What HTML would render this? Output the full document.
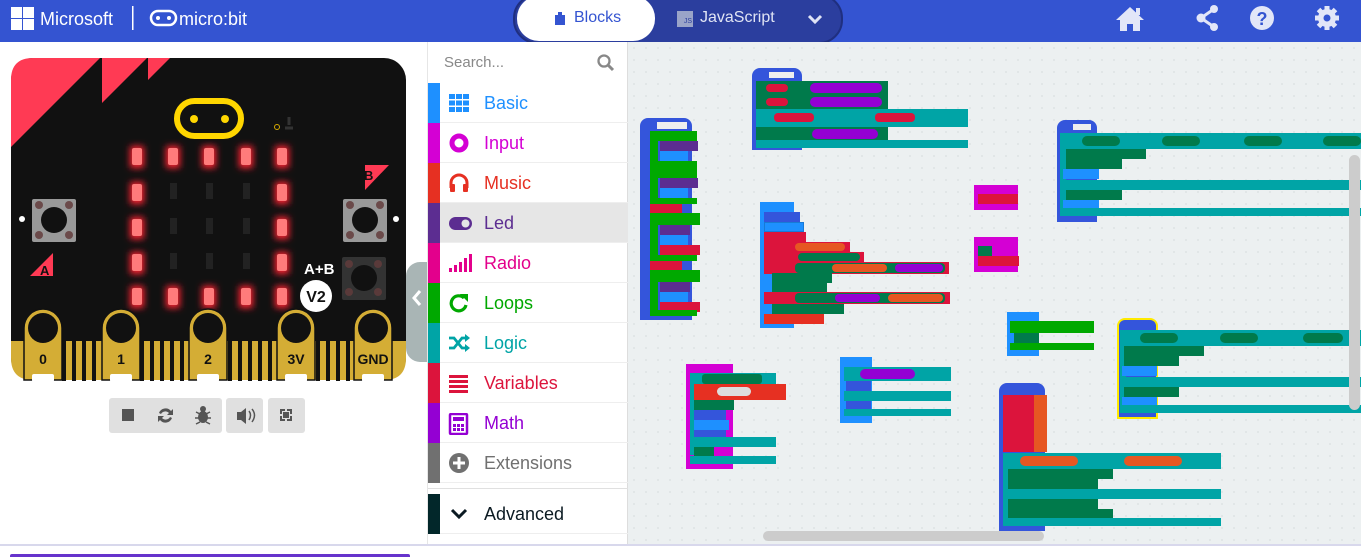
<!DOCTYPE html>
<html><head><meta charset="utf-8"><style>
*{margin:0;padding:0;box-sizing:border-box}
body{width:1361px;height:557px;overflow:hidden;position:relative;background:#fff;font-family:"Liberation Sans",Arial,sans-serif}
.hdr{position:absolute;left:0;top:0;width:1361px;height:42px;background:#3454d1}
.ws{position:absolute;left:628px;top:42px;width:733px;height:502px;background:#ecf0f1;background-image:radial-gradient(#dde2e4 1px,transparent 1px);background-size:12px 12px}
.tb{position:absolute;left:427px;top:42px;width:201px;height:502px;background:#fff;border-left:1px solid #e6e6e6;border-right:1px solid #ddd}
.cat{position:absolute;left:0;width:200px;height:40px;border-bottom:1px solid #eee;font-size:18px;line-height:40px}
.cat .bar{position:absolute;left:0;top:0;width:12px;height:40px}
.cat .t{position:absolute;left:56px;top:0}
.cat svg{position:absolute;left:20px;top:10px}
.b{position:absolute}
</style></head><body>
<div class="hdr"></div>
<svg style="position:absolute;left:0;top:0" width="520" height="42">
<g fill="#fff"><rect x="11" y="7" width="11" height="11"/><rect x="23" y="7" width="11" height="11"/><rect x="11" y="19" width="11" height="11"/><rect x="23" y="19" width="11" height="11"/></g>
<text x="40" y="25" fill="#fff" font-size="18" font-family="Liberation Sans">Microsoft</text>
<rect x="132" y="6" width="1.5" height="24" fill="#fff"/>
<rect x="151" y="11" width="25" height="14" rx="7" fill="none" stroke="#fff" stroke-width="2.5"/>
<circle cx="158" cy="18" r="2" fill="#fff"/><circle cx="169" cy="18" r="2" fill="#fff"/>
<text x="179" y="25" fill="#fff" font-size="18" font-family="Liberation Sans">micro:bit</text>
</svg>
<div style="position:absolute;left:513px;top:-6px;width:330px;height:50px;background:#2b3e9e;border-radius:24px;border:2px solid #1f2f80"></div>
<div style="position:absolute;left:517px;top:-4px;width:138px;height:45px;background:#fff;border-radius:22px"></div>
<svg style="position:absolute;left:553px;top:10px" width="14" height="16"><path d="M2 5h3V2h4v3h3v10H2z" fill="#3454d1"/></svg>
<div style="position:absolute;left:574px;top:9px;color:#3454d1;font-size:16px">Blocks</div>
<div style="position:absolute;left:677px;top:11px;width:16px;height:16px;background:#9aa4c8;font-size:7px;color:#2b3e9e;text-align:right;line-height:22px;padding-right:1px">JS</div>
<div style="position:absolute;left:700px;top:9px;color:#e0e4f4;font-size:16px">JavaScript</div>
<svg style="position:absolute;left:806px;top:12px" width="18" height="14"><path d="M3 4l6 6 6-6" stroke="#dfe3f5" stroke-width="3" fill="none"/></svg>
<svg style="position:absolute;left:1110px;top:0" width="251" height="42" fill="#e2e6f8">
<path d="M6 20L20 7l14 13h-4v11h-7v-7h-6v7h-7V20z"/><rect x="26" y="8" width="4" height="7"/>
<circle cx="104" cy="9" r="4"/><circle cx="104" cy="27" r="4"/><circle cx="91" cy="18" r="4.5"/><path d="M91 18L104 9M91 18L104 27" stroke="#e2e6f8" stroke-width="3"/>
<circle cx="152" cy="18" r="12"/><text x="152" y="25" font-size="18" font-weight="bold" fill="#3454d1" text-anchor="middle" font-family="Liberation Sans">?</text>
<circle cx="217" cy="18" r="9"/><g stroke="#e2e6f8" stroke-width="5"><path d="M217 6v24M205 18h24M208.5 9.5l17 17M225.5 9.5l-17 17"/></g><circle cx="217" cy="18" r="3.5" fill="#3454d1"/>
</svg>

<svg style="position:absolute;left:0;top:42px" width="427" height="502">
<defs><filter id="gl" x="-1" y="-1" width="3" height="3"><feGaussianBlur stdDeviation="3.5"/></filter></defs>
<g transform="translate(0,-42)">
<rect x="11" y="58" width="395" height="322" rx="22" fill="#111"/>
<path d="M33 58H100L11 147V80Q11 58 33 58z" fill="#ff3a54"/>
<path d="M102 58H147L102 103z" fill="#ff3a54"/>
<path d="M148 58H170L148 80z" fill="#ff3a54"/>
<rect x="177" y="101" width="64" height="35" rx="17.5" fill="none" stroke="#ffd600" stroke-width="6"/>
<circle cx="194" cy="119" r="4" fill="#ffd600"/><circle cx="225" cy="119" r="4" fill="#ffd600"/>
<circle cx="277" cy="127" r="2.5" fill="none" stroke="#d4a800" stroke-width="1"/>
<path d="M289 117v8M285 128h8" stroke="#333" stroke-width="3"/>
<g fill="#ff2030" filter="url(#gl)">
<rect x="130" y="146" width="14" height="22"/><rect x="166" y="146" width="14" height="22"/><rect x="202" y="146" width="14" height="22"/><rect x="239" y="146" width="14" height="22"/><rect x="275" y="146" width="14" height="22"/>
<rect x="130" y="182" width="14" height="22"/><rect x="275" y="182" width="14" height="22"/>
<rect x="130" y="217" width="14" height="22"/><rect x="275" y="217" width="14" height="22"/>
<rect x="130" y="252" width="14" height="22"/><rect x="275" y="252" width="14" height="22"/>
<rect x="130" y="286" width="14" height="22"/><rect x="166" y="286" width="14" height="22"/><rect x="202" y="286" width="14" height="22"/><rect x="239" y="286" width="14" height="22"/><rect x="275" y="286" width="14" height="22"/>
</g>
<g fill="#ff7b7b">
<rect x="132" y="148" width="10" height="17" rx="2"/><rect x="168" y="148" width="10" height="17" rx="2"/><rect x="204" y="148" width="10" height="17" rx="2"/><rect x="241" y="148" width="10" height="17" rx="2"/><rect x="277" y="148" width="10" height="17" rx="2"/>
<rect x="132" y="184" width="10" height="17" rx="2"/><rect x="277" y="184" width="10" height="17" rx="2"/>
<rect x="132" y="219" width="10" height="17" rx="2"/><rect x="277" y="219" width="10" height="17" rx="2"/>
<rect x="132" y="254" width="10" height="17" rx="2"/><rect x="277" y="254" width="10" height="17" rx="2"/>
<rect x="132" y="288" width="10" height="17" rx="2"/><rect x="168" y="288" width="10" height="17" rx="2"/><rect x="204" y="288" width="10" height="17" rx="2"/><rect x="241" y="288" width="10" height="17" rx="2"/><rect x="277" y="288" width="10" height="17" rx="2"/>
</g>
<g fill="#222"><rect x="170" y="183" width="7" height="16"/><rect x="206" y="183" width="7" height="16"/><rect x="243" y="183" width="7" height="16"/><rect x="170" y="218" width="7" height="16"/><rect x="206" y="218" width="7" height="16"/><rect x="243" y="218" width="7" height="16"/><rect x="170" y="253" width="7" height="16"/><rect x="206" y="253" width="7" height="16"/><rect x="243" y="253" width="7" height="16"/></g>
<rect x="32" y="199" width="44" height="43" rx="2" fill="#999"/><circle cx="54" cy="220" r="13" fill="#111"/>
<g fill="#6b4a4a"><circle cx="39" cy="205" r="4"/><circle cx="69" cy="205" r="4"/><circle cx="39" cy="235" r="4"/><circle cx="69" cy="235" r="4"/></g>
<circle cx="22" cy="219" r="3" fill="#fff"/>
<rect x="343" y="199" width="44" height="43" rx="2" fill="#999"/><circle cx="365" cy="220" r="13" fill="#111"/>
<g fill="#6b4a4a"><circle cx="350" cy="205" r="4"/><circle cx="380" cy="205" r="4"/><circle cx="350" cy="235" r="4"/><circle cx="380" cy="235" r="4"/></g>
<circle cx="396" cy="219" r="3" fill="#fff"/>
<rect x="342" y="257" width="44" height="43" rx="2" fill="#333"/><circle cx="364" cy="278" r="13" fill="#111"/>
<g fill="#5a3a3a"><circle cx="349" cy="264" r="4"/><circle cx="378" cy="264" r="4"/><circle cx="349" cy="292" r="4"/><circle cx="378" cy="292" r="4"/></g>
<path d="M30 276L53 253V276z" fill="#ff3a54"/><text x="40" y="275" font-size="13" font-weight="bold" fill="#111" font-family="Liberation Sans">A</text>
<path d="M365 190L389 165H365z" fill="#ff3a54"/><text x="364" y="180" font-size="13" font-weight="bold" fill="#111" font-family="Liberation Sans">B</text>
<text x="304" y="274" font-size="15" font-weight="bold" fill="#fff" font-family="Liberation Sans">A+B</text>
<circle cx="316" cy="296" r="16" fill="#fff"/><text x="316" y="302" font-size="16" font-weight="bold" fill="#111" text-anchor="middle" font-family="Liberation Sans">V2</text>
<path d="M11 341H406V358Q406 380 384 380H33Q11 380 11 358z" fill="#d4ad35"/>
<g fill="#111">
<rect x="62" y="341" width="4" height="40"/><rect x="72" y="341" width="4" height="40"/><rect x="82" y="341" width="4" height="40"/><rect x="92" y="341" width="4" height="40"/>
<rect x="140" y="341" width="4" height="40"/><rect x="150" y="341" width="4" height="40"/><rect x="160" y="341" width="4" height="40"/><rect x="170" y="341" width="4" height="40"/><rect x="180" y="341" width="4" height="40"/>
<rect x="228" y="341" width="4" height="40"/><rect x="238" y="341" width="4" height="40"/><rect x="248" y="341" width="4" height="40"/><rect x="258" y="341" width="4" height="40"/><rect x="268" y="341" width="4" height="40"/>
<rect x="316" y="341" width="4" height="40"/><rect x="326" y="341" width="4" height="40"/><rect x="336" y="341" width="4" height="40"/><rect x="346" y="341" width="4" height="40"/>
</g>
<g fill="#d4ad35" stroke="#111" stroke-width="1.5">
<path d="M24 380V328a19 19 0 0 1 38 0V380z"/><path d="M102 380V328a19 19 0 0 1 38 0V380z"/><path d="M189 380V328a19 19 0 0 1 38 0V380z"/><path d="M277 380V328a19 19 0 0 1 38 0V380z"/><path d="M354 380V328a19 19 0 0 1 38 0V380z"/>
</g>
<g fill="#111"><circle cx="43" cy="328" r="15"/><circle cx="121" cy="328" r="15"/><circle cx="208" cy="328" r="15"/><circle cx="296" cy="328" r="15"/><circle cx="373" cy="328" r="15"/></g>
<g font-size="14" font-weight="bold" fill="#111" text-anchor="middle" font-family="Liberation Sans"><text x="43" y="364">0</text><text x="121" y="364">1</text><text x="208" y="364">2</text><text x="296" y="364">3V</text><text x="373" y="364">GND</text></g>
<g fill="#fff"><rect x="32" y="374" width="22" height="8" rx="2"/><rect x="110" y="374" width="22" height="8" rx="2"/><rect x="197" y="374" width="22" height="8" rx="2"/><rect x="285" y="374" width="22" height="8" rx="2"/><rect x="362" y="374" width="22" height="8" rx="2"/></g>
<rect x="109" y="398" width="113" height="35" rx="3" fill="#e0e0e0"/><rect x="226" y="398" width="37" height="35" rx="3" fill="#e0e0e0"/><rect x="268" y="398" width="37" height="35" rx="3" fill="#e0e0e0"/>
<g fill="#555"><rect x="122" y="409" width="12" height="12"/>
<path d="M159 413a7 7 0 0 1 12-2l2-2v6h-6l2-2a5 5 0 0 0-8 1zM172 418a7 7 0 0 1-12 2l-2 2v-6h6l-2 2a5 5 0 0 0 8-1z"/>
<ellipse cx="203" cy="417" rx="5" ry="6"/><path d="M196 412l4 2M210 412l-4 2M195 418h4M211 418h-4M196 424l4-2M210 424l-4-2" stroke="#555" stroke-width="1.5"/><circle cx="203" cy="409" r="3"/>
<path d="M237 412h4l5-4v16l-5-4h-4z"/><path d="M249 411q3 4 0 9M252 409q5 6 0 13" stroke="#555" stroke-width="1.5" fill="none"/>
<path d="M280 409h5v2h-3v3h-2zM292 409h-5v2h3v3h2zM280 421h5v-2h-3v-3h-2zM292 421h-5v-2h3v-3h2z"/><rect x="283" y="412" width="6" height="6"/>
</g>
</g></svg>
<div style="position:absolute;left:406px;top:262px;width:24px;height:100px;background:#a9b5b5;border-radius:14px 0 0 14px"></div>
<svg style="position:absolute;left:410px;top:288px" width="14" height="20"><path d="M10 3L4 10l6 7" stroke="#fff" stroke-width="3" fill="none"/></svg>

<div class="tb">
<div style="position:absolute;left:16px;top:12px;color:#888;font-size:15px">Search...</div>
<svg style="position:absolute;left:169px;top:12px" width="18" height="18"><circle cx="7" cy="7" r="5.5" stroke="#888" stroke-width="2.3" fill="none"/><path d="M11 11l5 5" stroke="#888" stroke-width="3"/></svg>
<div class="cat" style="top:41px;color:#1e90ff"><div class="bar" style="background:#1e90ff"></div><svg width="22" height="20" fill="#1e90ff"><rect x="1" y="1" width="6" height="5"/><rect x="8" y="1" width="6" height="5"/><rect x="15" y="1" width="6" height="5"/><rect x="1" y="7.5" width="6" height="5"/><rect x="8" y="7.5" width="6" height="5"/><rect x="15" y="7.5" width="6" height="5"/><rect x="1" y="14" width="6" height="5"/><rect x="8" y="14" width="6" height="5"/><rect x="15" y="14" width="6" height="5"/></svg><span class="t">Basic</span></div>
<div class="cat" style="top:81px;color:#d400d4"><div class="bar" style="background:#d400d4"></div><svg width="22" height="20"><circle cx="11" cy="10" r="7" stroke="#d400d4" stroke-width="5" fill="none"/></svg><span class="t">Input</span></div>
<div class="cat" style="top:121px;color:#e63022"><div class="bar" style="background:#e63022"></div><svg width="22" height="20"><path d="M3 15v-5a8 8 0 0 1 16 0v5" stroke="#e63022" stroke-width="3" fill="none"/><rect x="2" y="11" width="5" height="8" rx="1" fill="#e63022"/><rect x="15" y="11" width="5" height="8" rx="1" fill="#e63022"/></svg><span class="t">Music</span></div>
<div class="cat" style="top:161px;color:#5c2d91;background:#e6e6e6"><div class="bar" style="background:#5c2d91"></div><svg width="26" height="20"><rect x="1" y="4" width="23" height="13" rx="6.5" fill="#5c2d91"/><circle cx="17.5" cy="10.5" r="4" fill="#e6e6e6"/></svg><span class="t">Led</span></div>
<div class="cat" style="top:201px;color:#e3008c"><div class="bar" style="background:#e3008c"></div><svg width="24" height="22" fill="#e3008c"><rect x="1" y="15" width="3" height="4"/><rect x="6" y="12" width="3" height="7"/><rect x="11" y="9" width="3" height="10"/><rect x="16" y="5" width="3" height="14"/><rect x="21" y="1" width="3" height="18"/></svg><span class="t">Radio</span></div>
<div class="cat" style="top:241px;color:#00a800"><div class="bar" style="background:#00a800"></div><svg width="22" height="20"><path d="M16 5A7.5 7.5 0 1 0 18 12" stroke="#00a800" stroke-width="3.2" fill="none"/><path d="M12 1h8v8z" fill="#00a800"/></svg><span class="t">Loops</span></div>
<div class="cat" style="top:281px;color:#00a4a6"><div class="bar" style="background:#00a4a6"></div><svg width="22" height="20"><path d="M1 5h5l8 10h4M1 15h5l8-10h4" stroke="#00a4a6" stroke-width="2.8" fill="none"/><path d="M17 1l5 4-5 4zM17 11l5 4-5 4z" fill="#00a4a6"/></svg><span class="t">Logic</span></div>
<div class="cat" style="top:321px;color:#dc143c"><div class="bar" style="background:#dc143c"></div><svg width="22" height="20" fill="#dc143c"><rect x="1" y="2" width="19" height="3"/><rect x="1" y="7" width="19" height="3"/><rect x="1" y="12" width="19" height="3"/><rect x="1" y="17" width="19" height="3"/></svg><span class="t">Variables</span></div>
<div class="cat" style="top:361px;color:#9400d3"><div class="bar" style="background:#9400d3"></div><svg width="22" height="22"><rect x="2" y="1" width="17" height="20" rx="1" stroke="#9400d3" stroke-width="2.5" fill="none"/><rect x="5" y="4" width="11" height="4" fill="#9400d3"/><g fill="#9400d3"><rect x="5" y="11" width="3" height="3"/><rect x="9" y="11" width="3" height="3"/><rect x="13" y="11" width="3" height="3"/><rect x="5" y="15" width="3" height="3"/><rect x="9" y="15" width="3" height="3"/><rect x="13" y="15" width="3" height="3"/></g></svg><span class="t">Math</span></div>
<div class="cat" style="top:401px;color:#707070"><div class="bar" style="background:#707070"></div><svg width="22" height="22"><circle cx="11" cy="10" r="10" fill="#707070"/><path d="M11 4v12M5 10h12" stroke="#fff" stroke-width="3"/></svg><span class="t">Extensions</span></div>
<div style="position:absolute;left:0;top:446px;width:200px;height:1px;background:#e0e0e0"></div>
<div class="cat" style="top:452px;color:#0b1a22"><div class="bar" style="background:#02272a"></div><svg width="22" height="20"><path d="M4 6l7 7 7-7" stroke="#0b1a22" stroke-width="3" fill="none"/></svg><span class="t">Advanced</span></div>
</div>

<div class="ws"></div>
<div id="blk">
<div class="b" style="left:640px;top:118px;width:52px;height:202px;background:#3455db;border-radius:8px 8px 0 0"></div>
<div class="b" style="left:657px;top:122px;width:30px;height:7px;background:#eee"></div>
<div class="b" style="left:650px;top:131px;width:47px;height:10px;background:#00a900"></div>
<div class="b" style="left:650px;top:141px;width:8px;height:30px;background:#00a900"></div>
<div class="b" style="left:660px;top:141px;width:38px;height:10px;background:#5c2d91"></div>
<div class="b" style="left:660px;top:151px;width:28px;height:10px;background:#1e90ff"></div>
<div class="b" style="left:650px;top:161px;width:47px;height:17px;background:#00a900"></div>
<div class="b" style="left:650px;top:178px;width:8px;height:30px;background:#00a900"></div>
<div class="b" style="left:660px;top:178px;width:38px;height:10px;background:#5c2d91"></div>
<div class="b" style="left:660px;top:188px;width:28px;height:10px;background:#1e90ff"></div>
<div class="b" style="left:650px;top:198px;width:47px;height:6px;background:#00a900"></div>
<div class="b" style="left:650px;top:204px;width:32px;height:10px;background:#dc143c"></div>
<div class="b" style="left:650px;top:213px;width:50px;height:12px;background:#00a900"></div>
<div class="b" style="left:650px;top:225px;width:8px;height:30px;background:#00a900"></div>
<div class="b" style="left:660px;top:225px;width:30px;height:10px;background:#5c2d91"></div>
<div class="b" style="left:660px;top:235px;width:28px;height:10px;background:#1e90ff"></div>
<div class="b" style="left:660px;top:245px;width:40px;height:10px;background:#dc143c"></div>
<div class="b" style="left:650px;top:255px;width:47px;height:6px;background:#00a900"></div>
<div class="b" style="left:650px;top:261px;width:32px;height:10px;background:#dc143c"></div>
<div class="b" style="left:650px;top:270px;width:50px;height:12px;background:#00a900"></div>
<div class="b" style="left:650px;top:282px;width:8px;height:30px;background:#00a900"></div>
<div class="b" style="left:660px;top:282px;width:30px;height:10px;background:#5c2d91"></div>
<div class="b" style="left:660px;top:292px;width:28px;height:10px;background:#1e90ff"></div>
<div class="b" style="left:660px;top:302px;width:40px;height:10px;background:#dc143c"></div>
<div class="b" style="left:650px;top:310px;width:47px;height:6px;background:#00a900"></div>
<div class="b" style="left:752px;top:68px;width:50px;height:82px;background:#3455db;border-radius:8px 8px 0 0"></div>
<div class="b" style="left:769px;top:72px;width:25px;height:6px;background:#eee"></div>
<div class="b" style="left:756px;top:81px;width:10px;height:62px;background:#007a4b"></div>
<div class="b" style="left:762px;top:81px;width:126px;height:14px;background:#007a4b"></div>
<div class="b" style="left:810px;top:83px;width:72px;height:10px;background:#9400d3;border-radius:5px"></div>
<div class="b" style="left:766px;top:84px;width:22px;height:8px;background:#dc143c;border-radius:4px"></div>
<div class="b" style="left:762px;top:95px;width:126px;height:14px;background:#007a4b"></div>
<div class="b" style="left:810px;top:97px;width:72px;height:10px;background:#9400d3;border-radius:5px"></div>
<div class="b" style="left:766px;top:98px;width:22px;height:8px;background:#dc143c;border-radius:4px"></div>
<div class="b" style="left:756px;top:109px;width:212px;height:18px;background:#00a4a6"></div>
<div class="b" style="left:774px;top:113px;width:40px;height:9px;background:#dc143c;border-radius:4px"></div>
<div class="b" style="left:875px;top:113px;width:40px;height:9px;background:#dc143c;border-radius:4px"></div>
<div class="b" style="left:766px;top:127px;width:122px;height:15px;background:#007a4b"></div>
<div class="b" style="left:812px;top:129px;width:66px;height:10px;background:#9400d3;border-radius:5px"></div>
<div class="b" style="left:756px;top:140px;width:212px;height:8px;background:#00a4a6"></div>
<div class="b" style="left:760px;top:202px;width:34px;height:126px;background:#1e90ff"></div>
<div class="b" style="left:764px;top:212px;width:36px;height:10px;background:#3455db"></div>
<div class="b" style="left:764px;top:222px;width:40px;height:10px;background:#1e90ff;border:1px solid #187ad6"></div>
<div class="b" style="left:764px;top:232px;width:42px;height:10px;background:#dc143c"></div>
<div class="b" style="left:764px;top:242px;width:86px;height:10px;background:#dc143c"></div>
<div class="b" style="left:795px;top:243px;width:50px;height:8px;background:#e65722;border-radius:4px"></div>
<div class="b" style="left:764px;top:252px;width:100px;height:10px;background:#dc143c"></div>
<div class="b" style="left:798px;top:253px;width:62px;height:8px;background:#007a4b;border-radius:4px"></div>
<div class="b" style="left:764px;top:262px;width:185px;height:12px;background:#dc143c"></div>
<div class="b" style="left:795px;top:263px;width:150px;height:10px;background:#007a4b;border-radius:4px"></div>
<div class="b" style="left:832px;top:264px;width:55px;height:8px;background:#e65722;border-radius:4px"></div>
<div class="b" style="left:895px;top:264px;width:48px;height:8px;background:#9400d3;border-radius:4px"></div>
<div class="b" style="left:772px;top:273px;width:60px;height:10px;background:#007a4b"></div>
<div class="b" style="left:772px;top:283px;width:55px;height:10px;background:#007a4b"></div>
<div class="b" style="left:764px;top:292px;width:186px;height:12px;background:#dc143c"></div>
<div class="b" style="left:795px;top:293px;width:150px;height:10px;background:#007a4b;border-radius:4px"></div>
<div class="b" style="left:835px;top:294px;width:45px;height:8px;background:#9400d3;border-radius:4px"></div>
<div class="b" style="left:888px;top:294px;width:55px;height:8px;background:#e65722;border-radius:4px"></div>
<div class="b" style="left:772px;top:304px;width:72px;height:10px;background:#007a4b"></div>
<div class="b" style="left:764px;top:314px;width:60px;height:10px;background:#e63022"></div>
<div class="b" style="left:974px;top:185px;width:44px;height:25px;background:#d400d4"></div>
<div class="b" style="left:978px;top:194px;width:40px;height:10px;background:#dc143c"></div>
<div class="b" style="left:974px;top:237px;width:44px;height:35px;background:#d400d4"></div>
<div class="b" style="left:978px;top:246px;width:14px;height:10px;background:#007a4b"></div>
<div class="b" style="left:978px;top:256px;width:41px;height:10px;background:#dc143c"></div>
<div class="b" style="left:1057px;top:120px;width:40px;height:102px;background:#3455db;border-radius:8px 8px 0 0"></div>
<div class="b" style="left:1073px;top:124px;width:18px;height:6px;background:#eee"></div>
<div class="b" style="left:1060px;top:133px;width:301px;height:16px;background:#00a4a6"></div>
<div class="b" style="left:1060px;top:149px;width:6px;height:62px;background:#00a4a6"></div>
<div class="b" style="left:1082px;top:136px;width:38px;height:10px;background:#007a4b;border-radius:5px"></div>
<div class="b" style="left:1162px;top:136px;width:38px;height:10px;background:#007a4b;border-radius:5px"></div>
<div class="b" style="left:1244px;top:136px;width:38px;height:10px;background:#007a4b;border-radius:5px"></div>
<div class="b" style="left:1323px;top:136px;width:38px;height:10px;background:#007a4b;border-radius:5px"></div>
<div class="b" style="left:1066px;top:149px;width:80px;height:10px;background:#007a4b"></div>
<div class="b" style="left:1066px;top:159px;width:56px;height:10px;background:#007a4b"></div>
<div class="b" style="left:1063px;top:169px;width:36px;height:10px;background:#1e90ff"></div>
<div class="b" style="left:1060px;top:180px;width:301px;height:10px;background:#00a4a6"></div>
<div class="b" style="left:1066px;top:190px;width:56px;height:10px;background:#007a4b"></div>
<div class="b" style="left:1063px;top:200px;width:36px;height:10px;background:#1e90ff"></div>
<div class="b" style="left:1060px;top:208px;width:301px;height:8px;background:#00a4a6"></div>
<div class="b" style="left:686px;top:364px;width:47px;height:105px;background:#d400d4"></div>
<div class="b" style="left:690px;top:373px;width:86px;height:12px;background:#00a4a6"></div>
<div class="b" style="left:702px;top:374px;width:60px;height:10px;background:#007a4b;border-radius:3px"></div>
<div class="b" style="left:690px;top:385px;width:4px;height:70px;background:#00a4a6"></div>
<div class="b" style="left:694px;top:384px;width:92px;height:16px;background:#e63022"></div>
<div class="b" style="left:717px;top:387px;width:34px;height:9px;background:#ddd;border-radius:5px"></div>
<div class="b" style="left:694px;top:400px;width:40px;height:10px;background:#007a4b"></div>
<div class="b" style="left:694px;top:410px;width:32px;height:10px;background:#3455db"></div>
<div class="b" style="left:694px;top:420px;width:35px;height:10px;background:#1e90ff"></div>
<div class="b" style="left:694px;top:430px;width:32px;height:10px;background:#3455db"></div>
<div class="b" style="left:690px;top:437px;width:86px;height:10px;background:#00a4a6"></div>
<div class="b" style="left:694px;top:447px;width:20px;height:10px;background:#007a4b"></div>
<div class="b" style="left:690px;top:456px;width:86px;height:8px;background:#00a4a6"></div>
<div class="b" style="left:840px;top:357px;width:32px;height:66px;background:#1e90ff"></div>
<div class="b" style="left:844px;top:367px;width:107px;height:14px;background:#00a4a6"></div>
<div class="b" style="left:860px;top:369px;width:55px;height:10px;background:#9400d3;border-radius:5px"></div>
<div class="b" style="left:846px;top:381px;width:25px;height:10px;background:#3455db"></div>
<div class="b" style="left:844px;top:391px;width:107px;height:10px;background:#00a4a6"></div>
<div class="b" style="left:846px;top:401px;width:25px;height:10px;background:#3455db"></div>
<div class="b" style="left:844px;top:409px;width:107px;height:7px;background:#00a4a6"></div>
<div class="b" style="left:1007px;top:312px;width:32px;height:44px;background:#1e90ff"></div>
<div class="b" style="left:1010px;top:321px;width:84px;height:12px;background:#00a900"></div>
<div class="b" style="left:1014px;top:333px;width:25px;height:10px;background:#007a4b"></div>
<div class="b" style="left:1010px;top:343px;width:84px;height:7px;background:#00a900"></div>
<div class="b" style="left:1117px;top:318px;width:41px;height:101px;background:#3455db;border:2px solid #ffea00;border-radius:8px 8px 0 0"></div>
<div class="b" style="left:1120px;top:330px;width:241px;height:16px;background:#00a4a6"></div>
<div class="b" style="left:1120px;top:346px;width:6px;height:62px;background:#00a4a6"></div>
<div class="b" style="left:1140px;top:333px;width:38px;height:10px;background:#007a4b;border-radius:5px"></div>
<div class="b" style="left:1220px;top:333px;width:38px;height:10px;background:#007a4b;border-radius:5px"></div>
<div class="b" style="left:1303px;top:333px;width:40px;height:10px;background:#007a4b;border-radius:5px"></div>
<div class="b" style="left:1124px;top:346px;width:80px;height:10px;background:#007a4b"></div>
<div class="b" style="left:1124px;top:356px;width:55px;height:10px;background:#007a4b"></div>
<div class="b" style="left:1122px;top:366px;width:35px;height:10px;background:#1e90ff"></div>
<div class="b" style="left:1120px;top:377px;width:241px;height:10px;background:#00a4a6"></div>
<div class="b" style="left:1124px;top:387px;width:55px;height:10px;background:#007a4b"></div>
<div class="b" style="left:1122px;top:397px;width:35px;height:10px;background:#1e90ff"></div>
<div class="b" style="left:1120px;top:405px;width:241px;height:8px;background:#00a4a6"></div>
<div class="b" style="left:999px;top:383px;width:46px;height:148px;background:#3455db;border-radius:8px 8px 0 0"></div>
<div class="b" style="left:1003px;top:395px;width:32px;height:57px;background:#dc143c"></div>
<div class="b" style="left:1034px;top:395px;width:13px;height:57px;background:#e65722"></div>
<div class="b" style="left:1003px;top:453px;width:218px;height:16px;background:#00a4a6"></div>
<div class="b" style="left:1020px;top:456px;width:58px;height:10px;background:#e65722;border-radius:5px"></div>
<div class="b" style="left:1124px;top:456px;width:58px;height:10px;background:#e65722;border-radius:5px"></div>
<div class="b" style="left:1003px;top:469px;width:5px;height:50px;background:#00a4a6"></div>
<div class="b" style="left:1008px;top:469px;width:105px;height:10px;background:#007a4b"></div>
<div class="b" style="left:1008px;top:479px;width:90px;height:10px;background:#007a4b"></div>
<div class="b" style="left:1003px;top:489px;width:218px;height:10px;background:#00a4a6"></div>
<div class="b" style="left:1008px;top:499px;width:90px;height:10px;background:#007a4b"></div>
<div class="b" style="left:1008px;top:509px;width:105px;height:10px;background:#007a4b"></div>
<div class="b" style="left:1003px;top:518px;width:218px;height:8px;background:#00a4a6"></div>
</div>
<div class="b" style="left:1349px;top:155px;width:11px;height:255px;background:#ccc;border-radius:6px"></div>
<div class="b" style="left:763px;top:531px;width:281px;height:10px;background:#ccc;border-radius:5px"></div>
<div class="b" style="left:0;top:544px;width:1361px;height:2px;background:#d8d8ec"></div>
<div class="b" style="left:0;top:546px;width:1361px;height:11px;background:#fff"></div>
<div class="b" style="left:10px;top:554px;width:400px;height:3px;background:#6633cc;border-radius:2px 2px 0 0"></div>
</body></html>
